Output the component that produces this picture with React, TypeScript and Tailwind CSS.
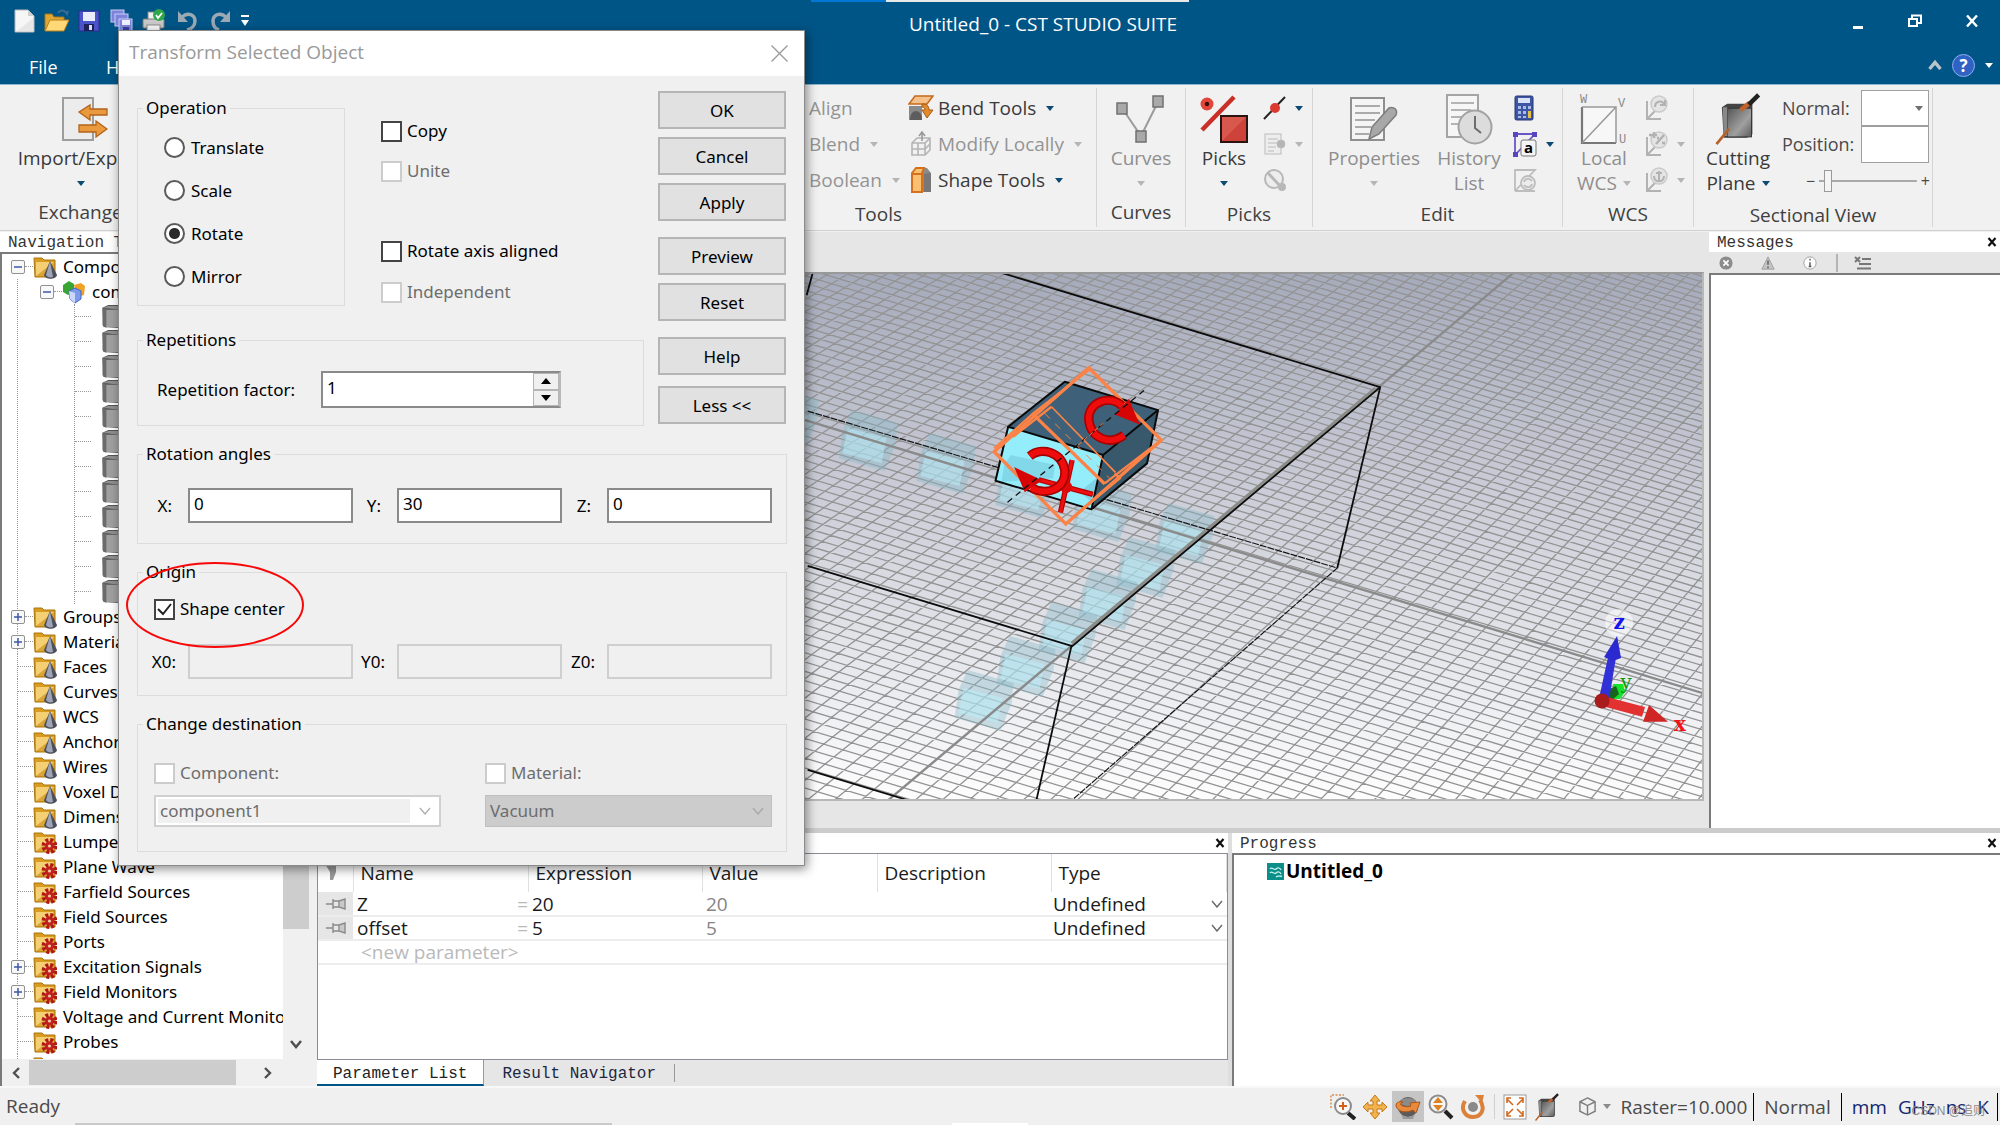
import React from "react";

const UI = "font-['Open_Sans','Noto_Sans',sans-serif]";
const MONO = "font-['Liberation_Mono','Noto_Sans_CJK_SC',monospace]";

/* ---------- small shared pieces ---------- */

function Caret({ muted = false }: { muted?: boolean }) {
  return (
    <svg viewBox="0 0 8 5" className={muted ? "w-2 h-[5px] text-[#b5b5b5] shrink-0" : "w-2 h-[5px] text-[#0b4a72] shrink-0"}>
      <path d="M0 0h8L4 5z" fill="currentColor" />
    </svg>
  );
}

function Chevron({ className = "" }: { className?: string }) {
  return (
    <svg viewBox="0 0 12 8" className={"w-3 h-2 " + className} fill="none" stroke="currentColor" strokeWidth="1.4">
      <path d="M1 1l5 6 5-6" />
    </svg>
  );
}

function CloseX() {
  return (
    <svg viewBox="0 0 10 10" className="w-2.5 h-2.5" stroke="#111" strokeWidth="2.2">
      <path d="M1.5 1l7 8M8.5 1l-7 8" />
    </svg>
  );
}

/* ---------- title bar ---------- */

function TitleBar() {
  return (
    <header className="relative flex h-[84px] shrink-0 flex-col bg-[#005587] text-white">
      <div className="absolute inset-x-0 top-0 flex h-0.5 justify-center">
        <div className="h-0.5 w-[75px] bg-[#0078d7]" />
        <div className="h-0.5 w-[303px] bg-[#e8e8e8]" />
      </div>
      <div className="grid h-[42px] grid-cols-[1fr_auto_1fr] items-center">
        <div className="flex items-center gap-2 pl-[14px]">
          <svg viewBox="0 0 22 24" className="h-6 w-[22px]">
            <path d="M1 1h13l6 6v16H1z" fill="#f6f6f6" stroke="#b9b9b9" />
            <path d="M14 1v6h6z" fill="#cfcfcf" />
            <path d="M3 22L19 9v13z" fill="#dcdcdc" opacity=".6" />
          </svg>
          <svg viewBox="0 0 26 24" className="h-6 w-[26px]">
            <path d="M1 22V5h7l2 3h10v4H8z" fill="#e0a732" stroke="#a97412" />
            <path d="M1 22l5-11h19l-5 11z" fill="#ffd877" stroke="#b57e17" />
            <path d="M14 4c3-4 7-3 9 1l1-3" fill="none" stroke="#3b6c93" strokeWidth="2" />
          </svg>
          <svg viewBox="0 0 22 22" className="h-[22px] w-[22px]">
            <rect x="1" y="1" width="20" height="20" fill="#4b53c8" stroke="#2b2f92" />
            <rect x="5" y="2" width="12" height="9" fill="#e9ecfb" />
            <rect x="6" y="14" width="10" height="7" fill="#1e2156" />
            <rect x="11" y="15" width="3" height="5" fill="#d9dcf5" />
          </svg>
          <svg viewBox="0 0 24 24" className="ml-0.5 h-6 w-6">
            <g fill="#7d84dc" stroke="#c9ccf5">
              <rect x="1" y="1" width="13" height="12" />
              <rect x="5" y="5" width="13" height="12" />
              <rect x="9" y="10" width="13" height="12" />
            </g>
            <rect x="12" y="11" width="8" height="5" fill="#eef0ff" />
            <rect x="13" y="18" width="6" height="4" fill="#3a3f9b" />
          </svg>
          <svg viewBox="0 0 24 24" className="h-6 w-6">
            <rect x="6" y="3" width="12" height="8" fill="#f0f0f0" stroke="#888" />
            <rect x="1" y="10" width="21" height="9" rx="1" fill="#c9c9c9" stroke="#7b7b7b" />
            <rect x="5" y="16" width="13" height="7" fill="#fafafa" stroke="#8c8c8c" />
            <circle cx="17" cy="6" r="6" fill="#2fa84a" />
            <path d="M14 6l2 3 4-5" fill="none" stroke="#fff" strokeWidth="1.8" />
          </svg>
          <svg viewBox="0 0 24 24" className="ml-0.5 h-6 w-6" fill="none" stroke="#9aa9b4" strokeWidth="3.5">
            <path d="M5 9c7-7 14-3 14 3 0 5-4 8-8 9" />
            <path d="M2 2v11h10z" fill="#9aa9b4" stroke="none" />
          </svg>
          <svg viewBox="0 0 24 24" className="h-6 w-6" fill="none" stroke="#9aa9b4" strokeWidth="3.5">
            <path d="M19 9C12 2 5 6 5 12c0 5 3 8 6 9" />
            <path d="M22 2v11H12z" fill="#9aa9b4" stroke="none" />
          </svg>
          <svg viewBox="0 0 10 12" className="h-3 w-2.5" fill="#fff">
            <path d="M1 0h8v2H1zM1 5h8L5 11z" />
          </svg>
        </div>
        <h1 className="pl-[86px] pt-1.5 text-[19px] leading-6">Untitled_0 - CST STUDIO SUITE</h1>
        <div className="flex items-center justify-end gap-11 pr-[22px]">
          <button aria-label="Minimize" className="flex h-4 w-3 items-end justify-center">
            <span className="h-[3px] w-2.5 bg-white" />
          </button>
          <button aria-label="Restore">
            <svg viewBox="0 0 14 14" className="h-3.5 w-3.5" fill="none" stroke="#fff" strokeWidth="2">
              <path d="M4 4V1.5h9V9h-3" />
              <rect x="1" y="5" width="8" height="7" />
            </svg>
          </button>
          <button aria-label="Close">
            <svg viewBox="0 0 12 12" className="h-3 w-3" stroke="#fff" strokeWidth="2.4">
              <path d="M1 0.5l10 11M11 0.5l-10 11" />
            </svg>
          </button>
        </div>
      </div>
      <div className="flex h-[42px] items-center justify-between pb-0">
        <nav className="flex pl-[29px] pt-2 text-[18px]">
          <a href="#file" className="w-[77px]">File</a>
          <a href="#home">Home</a>
        </nav>
        <div className="flex items-center gap-2.5 pr-[7px] pt-1">
          <svg viewBox="0 0 14 12" className="h-3 w-3.5" fill="none" stroke="#b9c3ca" strokeWidth="3.4">
            <path d="M1.5 10L7 3.5 12.5 10" />
          </svg>
          <button aria-label="Help" className="flex h-[23px] w-[23px] items-center justify-center rounded-full border border-[#8fb0ee] bg-[#2f62c4] text-[17px] font-bold leading-none">
            ?
          </button>
          <svg viewBox="0 0 8 5" className="h-[5px] w-2" fill="#fff">
            <path d="M0 0h8L4 5z" />
          </svg>
        </div>
      </div>
    </header>
  );
}

/* ---------- ribbon ---------- */

function Group({ label, className, children }: { label: string; className: string; children: React.ReactNode }) {
  return (
    <section className={"my-[3px] flex shrink-0 flex-col border-r border-[#d5d5d5] " + className}>
      <div className="flex flex-1">{children}</div>
      <h2 className="h-[32px] text-center text-[19px] leading-8 text-[#3f3f3f]">{label}</h2>
    </section>
  );
}

function Big({ icon, lines, muted = false, className = "", caret = true }: { icon: React.ReactNode; lines: string[]; muted?: boolean; className?: string; caret?: boolean }) {
  return (
    <button className={"flex flex-col items-center pt-1 text-[19px] leading-[25px] " + (muted ? "text-[#8e8e8e] " : "text-[#3a3a3a] ") + className}>
      <span className="flex h-[54px] items-center justify-center">{icon}</span>
      <span>{lines[0]}</span>
      <span className="flex h-[25px] items-center gap-1.5">
        {lines[1]}
        {caret && <Caret muted={muted} />}
      </span>
    </button>
  );
}

function Tool({ icon, label, muted = false, caret = true }: { icon?: React.ReactNode; label: string; muted?: boolean; caret?: boolean }) {
  return (
    <button className={"flex h-9 items-center gap-1 whitespace-nowrap text-[19px] " + (muted ? "text-[#949494]" : "text-[#3a3a3a]")}>
      {icon}
      {label}
      {caret && <span className="ml-1.5"><Caret muted={muted} /></span>}
    </button>
  );
}

function Small({ icon, label, caret = true, muted = false }: { icon: React.ReactNode; label: string; caret?: boolean; muted?: boolean }) {
  return (
    <button aria-label={label} className="flex h-9 items-center gap-2">
      {icon}
      {caret && <Caret muted={muted} />}
    </button>
  );
}

function CuttingIcon({ className }: { className: string }) {
  return (
    <svg viewBox="0 0 50 58" className={className}>
      <defs>
        <linearGradient id="cut" x1="0" y1="0" x2="1" y2="1">
          <stop offset="0" stopColor="#555" />
          <stop offset=".6" stopColor="#a0a0a0" />
          <stop offset="1" stopColor="#5c5c5c" />
        </linearGradient>
      </defs>
      <path d="M7 16l6-4h28v34l-6 4H9z" fill="#444" />
      <rect x="13" y="17" width="27" height="32" fill="url(#cut)" stroke="#333" />
      <path d="M8 16h5v32H9z" fill="#888" />
      <path d="M1 57l14-17" stroke="#b5622a" strokeWidth="3" />
      <path d="M28 19l10-8" stroke="#c5622a" strokeWidth="5" />
      <path d="M37 13L48 2" stroke="#222" strokeWidth="5" />
    </svg>
  );
}

function WcsIcon({ kind }: { kind: number }) {
  return (
    <svg viewBox="0 0 26 26" className="h-[26px] w-[26px]" fill="none" stroke="#b2b2b2" strokeWidth="2">
      <path d="M4 6v18h14M4 24l9-9" />
      <circle cx="16" cy="9" r="8" fill="#e4e4e4" stroke="#cacaca" strokeWidth="1.5" />
      {kind === 0 && <path d="M12 12c0-6 7-7 9-3M22 5v5h-5" />}
      {kind === 1 && <path d="M6 4h8M11 1v6M13 13l8-9M14 7h2M19 12h3" strokeWidth="2.4" />}
      {kind === 2 && <path d="M16 4v10M11 9c0 7 10 7 10 0M13 6h6" />}
    </svg>
  );
}

function Ribbon() {
  return (
    <div className="flex h-[147px] shrink-0 border-b border-t border-b-[#d0d0d0] border-t-[#8fb4cb] bg-[#f1f1f1]">
      <Group label="Exchange" className="w-[162px]">
        <Big
          className="mx-auto"
          lines={["Import/Export"]}
          icon={
            <svg viewBox="0 0 46 44" className="ml-2 h-11 w-[46px]">
              <rect x="1" y="1" width="30" height="42" fill="#ececec" stroke="#9d9d9d" strokeWidth="2" />
              <path d="M45 12H28V8L17 15l11 8v-5h17z" fill="#ea9a3c" stroke="#b3631a" strokeWidth="1.3" />
              <path d="M17 28h17v-4l11 8-11 8v-5H17z" fill="#ea9a3c" stroke="#b3631a" strokeWidth="1.3" />
            </svg>
          }
        />
      </Group>
      <div className="w-[499px] shrink-0" />
      <Group label="Tools" className="w-[436px]">
        <div className="ml-[148px] w-[99px] pt-[2px]">
          <Tool label="Align" muted caret={false} />
          <Tool label="Blend" muted />
          <Tool label="Boolean" muted />
        </div>
        <div className="pt-[2px]">
          <Tool
            label="Bend Tools"
            icon={
              <svg viewBox="0 0 26 26" className="h-[26px] w-[26px]">
                <path d="M7 1h18l-6 8H1z" fill="#f5c08a" stroke="#c46a1c" strokeWidth="1.5" />
                <path d="M1 11h13v14H1z" fill="#8a8a8a" />
                <path d="M2 25c0-12 12-12 12 0z" fill="#5d5d5d" />
                <path d="M14 9c6 0 7 3 7 6h4l-6 8-5-8h3c0-2-1-3-3-3z" fill="#e08a2c" stroke="#a85c12" />
              </svg>
            }
          />
          <Tool
            label="Modify Locally"
            muted
            icon={
              <svg viewBox="0 0 26 26" className="h-[26px] w-[26px]" fill="none" stroke="#b4b4b4" strokeWidth="1.6">
                <path d="M4 12l5-5h13v12l-5 5H4zM4 12h13v12M17 12l5-5M4 18h13l5-5M10 12v12" />
                <path d="M14 10V2M11 5l3-4 3 4" stroke="#999" />
              </svg>
            }
          />
          <Tool
            label="Shape Tools"
            icon={
              <svg viewBox="0 0 26 26" className="h-[26px] w-[26px]">
                <path d="M4 6l4-5h11l4 5v19H4z" fill="#8b8b8b" />
                <path d="M4 6l4-5h8l-2 5v19H4z" fill="#f8c070" stroke="#d6701c" strokeWidth="2" />
                <path d="M4 7h12" stroke="#d6701c" strokeWidth="2" />
                <path d="M16 7l7-1v19h-7z" fill="#777" />
              </svg>
            }
          />
        </div>
      </Group>
      <Group label="Curves" className="w-[89px]">
        <Big
          className="mx-auto"
          muted
          lines={["Curves"]}
          icon={
            <svg viewBox="0 0 50 50" className="h-[50px] w-[50px]">
              <path d="M6 14l19 28L42 8" fill="none" stroke="#9b9b9b" strokeWidth="2" />
              <g fill="#a9a9a9" stroke="#707070" strokeWidth="1.5">
                <rect x="1" y="9" width="10" height="11" />
                <rect x="37" y="2" width="10" height="11" />
                <rect x="20" y="37" width="10" height="11" />
              </g>
            </svg>
          }
        />
      </Group>
      <Group label="Picks" className="w-[127px]">
        <Big
          className="ml-[14px] w-12"
          lines={["Picks"]}
          icon={
            <svg viewBox="0 0 48 50" className="h-[50px] w-12">
              <circle cx="7" cy="10" r="6.5" fill="#e2453a" />
              <circle cx="7" cy="10" r="2.2" fill="#3a0d0a" />
              <path d="M2 36L34 3" stroke="#c92f26" strokeWidth="4.5" />
              <rect x="21" y="22" width="26" height="26" fill="#cd4239" stroke="#2a1412" strokeWidth="2" />
              <path d="M22 47V23h24z" fill="#e0675d" opacity=".6" />
            </svg>
          }
        />
        <div className="ml-[15px] pt-[2px]">
          <Small
            label="Pick edge"
            icon={
              <svg viewBox="0 0 24 24" className="h-6 w-6">
                <path d="M1 23L22 1" stroke="#222" strokeWidth="2" />
                <circle cx="12" cy="12" r="5" fill="#dc3a30" />
              </svg>
            }
          />
          <Small
            label="Pick list"
            muted
            icon={
              <svg viewBox="0 0 24 24" className="h-6 w-6" stroke="#bcbcbc" fill="none">
                <rect x="2" y="2" width="16" height="20" fill="#ededed" />
                <path d="M5 7h10M5 11h10M5 15h8M5 19h6" />
                <circle cx="18" cy="12" r="4" fill="#b5b5b5" />
              </svg>
            }
          />
          <Small
            label="Clear picks"
            caret={false}
            icon={
              <svg viewBox="0 0 24 24" className="h-6 w-6" stroke="#b8b8b8" strokeWidth="2" fill="#ededed">
                <circle cx="11" cy="11" r="9" />
                <path d="M5 5l13 14" strokeWidth="3" />
                <circle cx="19" cy="19" r="3" fill="#b8b8b8" />
              </svg>
            }
          />
        </div>
      </Group>
      <Group label="Edit" className="w-[250px]">
        <Big
          className="ml-[13px] w-[96px]"
          muted
          lines={["Properties"]}
          icon={
            <svg viewBox="0 0 50 48" className="h-12 w-[50px]">
              <rect x="2" y="3" width="33" height="42" fill="#f4f4f4" stroke="#8f8f8f" strokeWidth="2" />
              <path d="M6 11h25M6 18h25M6 25h20M6 32h16M6 39h14" stroke="#aaa" strokeWidth="2" />
              <path d="M20 44l3-12L40 13c5-2 9 2 7 7L30 39z" fill="#a8a8a8" stroke="#7d7d7d" strokeWidth="1.5" />
            </svg>
          }
        />
        <Big
          className="ml-1 w-[86px]"
          muted
          caret={false}
          lines={["History", "List"]}
          icon={
            <svg viewBox="0 0 48 52" className="h-[52px] w-12">
              <rect x="2" y="2" width="31" height="42" fill="#f6f6f6" stroke="#a5a5a5" strokeWidth="2" />
              <path d="M6 10h23M6 17h20M6 24h12M6 31h8" stroke="#b4b4b4" strokeWidth="2" />
              <circle cx="30" cy="34" r="16.5" fill="#dcdcdc" stroke="#a2a2a2" strokeWidth="2" />
              <path d="M30 23v12l6 5" fill="none" stroke="#6d6d6d" strokeWidth="2" />
            </svg>
          }
        />
        <div className="flex flex-col pt-[2px]">
          <Small
            label="Calculator"
            caret={false}
            icon={
              <svg viewBox="0 0 24 26" className="h-[26px] w-6">
                <rect x="3" y="1" width="18" height="24" rx="1.5" fill="#3d55a5" stroke="#26366f" />
                <rect x="6" y="3" width="12" height="5" fill="#d9e2f4" />
                <g fill="#a9bae6">
                  <path d="M6 11h3v3H6zM11 11h3v3h-3zM16 11h3v3h-3zM6 16h3v3H6zM11 16h3v3h-3zM6 21h3v2H6zM11 21h3v2h-3z" />
                </g>
                <path d="M16 16h3v7h-3z" fill="#e5c04a" />
              </svg>
            }
          />
          <Small
            label="Parameters"
            icon={
              <svg viewBox="0 0 26 26" className="h-[26px] w-[26px]">
                <path d="M3 24V3h20L3 24" fill="none" stroke="#6a55c9" strokeWidth="1.8" />
                <path d="M1 1h5v5H1zM20 1h5v5h-5zM1 21h5v5H1z" fill="#5a45c0" />
                <rect x="9" y="9" width="15" height="16" rx="2" fill="#f4f4f4" stroke="#777" />
                <text x="12" y="22" className="font-['Open_Sans',sans-serif] text-[15px] font-bold">a</text>
              </svg>
            }
          />
          <Small
            label="Parametric update"
            caret={false}
            icon={
              <svg viewBox="0 0 26 26" className="h-[26px] w-[26px]" fill="none" stroke="#bdbdbd" strokeWidth="1.8">
                <path d="M3 24V3h20L3 24M3 24h20" />
                <circle cx="16" cy="16" r="7" fill="#ececec" />
                <path d="M12 15c1-4 6-4 8-1M20 17c-1 4-6 4-8 1" />
              </svg>
            }
          />
        </div>
      </Group>
      <Group label="WCS" className="w-[131px]">
        <Big
          className="ml-[10px] w-[62px]"
          muted
          lines={["Local", "WCS"]}
          icon={
            <svg viewBox="0 0 48 52" className="-ml-1 h-[52px] w-12" fill="none">
              <rect x="4" y="14" width="34" height="36" fill="#f7f7f7" />
              <path d="M4 14v36h34" stroke="#777" strokeWidth="2.2" />
              <path d="M4 14h34v36M4 50L38 14" stroke="#999" strokeWidth="1.5" />
              <g fill="#8a8a8a" className="font-['Liberation_Mono',monospace] text-[12px]">
                <text x="2" y="10">W</text>
                <text x="40" y="14">V</text>
                <text x="41" y="50">U</text>
              </g>
            </svg>
          }
        />
        <div className="ml-[8px] pt-[2px]">
          <Small label="Rotate WCS" caret={false} icon={<WcsIcon kind={0} />} />
          <Small label="Move WCS" muted icon={<WcsIcon kind={1} />} />
          <Small label="Fix WCS" muted icon={<WcsIcon kind={2} />} />
        </div>
      </Group>
      <Group label="Sectional View" className="w-[239px]">
        <Big className="ml-2 w-[72px]" lines={["Cutting", "Plane"]} icon={<CuttingIcon className="h-[52px] w-12" />} />
        <div className="ml-2 flex-1 text-[18px] text-[#4a4a4a]">
          <div className="grid grid-cols-[1fr_68px] items-center pr-[3px] pt-0.5">
            <label htmlFor="normal">Normal:</label>
            <div className="relative">
              <select id="normal" className="block h-9 w-full appearance-none border border-[#9f9f9f] bg-white" />
              <svg viewBox="0 0 8 5" className="pointer-events-none absolute right-1.5 top-4 h-[5px] w-2">
                <path d="M0 0h8L4 5z" fill="#6f6f6f" />
              </svg>
            </div>
            <label htmlFor="position">Position:</label>
            <input id="position" className="h-[37px] w-full border border-[#9f9f9f] bg-white px-1" />
          </div>
          <div className="flex h-9 items-center gap-1 pl-6 pr-0.5 text-[16px]">
            <span>−</span>
            <input
              type="range"
              aria-label="Position of cutting plane"
              defaultValue={5}
              className="h-[22px] w-[94px] flex-1 appearance-none bg-transparent bg-[linear-gradient(#a9a9a9,#a9a9a9)] bg-[length:100%_2px] bg-center bg-no-repeat [&::-webkit-slider-thumb]:h-[22px] [&::-webkit-slider-thumb]:w-2 [&::-webkit-slider-thumb]:appearance-none [&::-webkit-slider-thumb]:border [&::-webkit-slider-thumb]:border-solid [&::-webkit-slider-thumb]:border-[#9a9a9a] [&::-webkit-slider-thumb]:bg-[#f4f4f4]"
            />
            <span>+</span>
          </div>
        </div>
      </Group>
    </div>
  );
}

/* ---------- navigation tree ---------- */

function Folder({ gear }: { gear: boolean }) {
  return (
    <svg viewBox="0 0 24 24" className="h-6 w-6 shrink-0">
      <path d="M1 3h8l2 2h11v17H2z" fill="#d99c1e" />
      <path d="M3 7h18v14H3z" fill="#f4cf73" />
      <path d="M3 21L21 7v14z" fill="#dba535" />
      <path d="M1 3h8l2 2h11v17H2z" fill="none" stroke="#a9750f" />
      {gear ? (
        <>
          <circle cx="16.5" cy="16" r="5.5" fill="none" stroke="#b01818" strokeWidth="5" strokeDasharray="2.6 1.72" />
          <circle cx="16.5" cy="16" r="4.5" fill="#c22020" />
          <circle cx="16.5" cy="16" r="1.6" fill="#f2c9a0" />
        </>
      ) : (
        <>
          <path d="M17 6l7 14c-1 5-12 5-13 0z" fill="#4d505a" />
          <path d="M17 6l3 16c-3 1-6 0-7-2z" fill="#9fa5b8" />
        </>
      )}
    </svg>
  );
}

function Expander({ open }: { open: boolean }) {
  return (
    <svg viewBox="0 0 14 14" className="h-3.5 w-3.5 shrink-0">
      <rect x=".5" y=".5" width="13" height="13" rx="1.5" fill="#f8f8f8" stroke="#919191" />
      <path d={open ? "M3 7h8" : "M3 7h8M7 3v8"} stroke="#3f57a8" strokeWidth="1.5" />
    </svg>
  );
}

const FOLDERS: [string, boolean, boolean][] = [
  ["Groups", false, true],
  ["Materials", false, true],
  ["Faces", false, false],
  ["Curves", false, false],
  ["WCS", false, false],
  ["Anchor Points", false, false],
  ["Wires", false, false],
  ["Voxel Data", false, false],
  ["Dimensions", false, false],
  ["Lumped Elements", true, false],
  ["Plane Wave", true, false],
  ["Farfield Sources", true, false],
  ["Field Sources", true, false],
  ["Ports", true, false],
  ["Excitation Signals", true, true],
  ["Field Monitors", true, true],
  ["Voltage and Current Monitors", true, false],
  ["Probes", true, false],
  ["Mesh", true, false],
];

function NavTree() {
  return (
    <aside className="flex w-[313px] shrink-0 flex-col">
      <h2 className={"h-5 bg-white pl-2 text-[16px] leading-[22px] text-[#333] " + MONO}>Navigation Tree</h2>
      <div className="flex min-h-0 flex-1 flex-col border-l-2 border-t-2 border-[#7a7a7a] bg-[#f0f0f0]">
        <div className="flex min-h-0 flex-1">
          <ul className="min-w-0 flex-1 overflow-hidden whitespace-nowrap bg-white text-[17px] font-[Tahoma,'Noto_Sans',sans-serif]">
            <li className="flex h-[25px] items-center pl-[9px]">
              <Expander open />
              <span className="w-2 border-t border-dotted border-[#999]" />
              <Folder gear={false} />
              <span className="pl-1.5">Components</span>
            </li>
            <li className="ml-[15px] border-l border-dotted border-[#999]">
              <div className="flex h-[25px] items-center pl-[22px]">
                <Expander open />
                <span className="w-2 border-t border-dotted border-[#999]" />
                <svg viewBox="0 0 24 24" className="h-6 w-6">
                  <path d="M1 5l6-4 5 3v9l-6 2-5-3z" fill="#3aa535" />
                  <path d="M12 5l7-2 4 3-1 9-7 2z" fill="#efa226" />
                  <path d="M7 11l6-3 6 3v8l-6 4-5-4z" fill="#7d9bea" stroke="#4765c4" />
                  <path d="M7 11l6 2v10l-5-4z" fill="#cbd7fb" />
                </svg>
                <span className="pl-1.5">component1</span>
              </div>
              <ul className="ml-[56px] border-l border-dotted border-[#999]">
                {Array.from({ length: 12 }, (_, i) => (
                  <li key={i} className="flex h-[25px] items-center">
                    <span className="w-4 border-t border-dotted border-[#999]" />
                    <svg viewBox="0 0 26 26" className="ml-2.5 h-[25px] w-[26px]">
                      <path d="M1 4l6-3h18v17l-7 7-16-1z" fill="#555" />
                      <path d="M1 4l4 1v20l-4-3z" fill="#6b6b6b" />
                      <path d="M5 6h13v18H5z" fill="#a0a0a0" />
                      <path d="M2 4l5-2h17l-6 4z" fill="#909090" />
                    </svg>
                  </li>
                ))}
              </ul>
            </li>
            {FOLDERS.map(([name, gear, exp]) => (
              <li key={name} className="ml-[15px] border-l border-dotted border-[#999]">
                <div className="flex h-[25px] items-center">
                  {exp ? (
                    <span className="-ml-[7px] flex shrink-0 items-center">
                      <Expander open={false} />
                      <span className="w-2 border-t border-dotted border-[#999]" />
                    </span>
                  ) : (
                    <span className="w-[15px] shrink-0 border-t border-dotted border-[#999]" />
                  )}
                  <Folder gear={gear} />
                  <span className="shrink-0 pl-1.5">{name}</span>
                </div>
              </li>
            ))}
          </ul>
          <div className="flex w-[26px] flex-col justify-end bg-[#f0f0f0]">
            <div className="h-[400px] bg-[#cdcdcd]" />
            <div className="flex h-[130px] items-end justify-center pb-2.5">
              <svg viewBox="0 0 12 8" className="h-2.5 w-3" fill="none" stroke="#505050" strokeWidth="2.5">
                <path d="M1 1l5 6 5-6" />
              </svg>
            </div>
          </div>
          <div className="w-1 bg-[#f0f0f0]" />
        </div>
        <div className="flex h-[27px] items-center">
          <span className="flex w-[27px] justify-center">
            <svg viewBox="0 0 8 12" className="h-3 w-2.5" fill="none" stroke="#505050" strokeWidth="2.4">
              <path d="M7 1L2 6l5 5" />
            </svg>
          </span>
          <span className="h-[25px] w-[207px] bg-[#cdcdcd]" />
          <span className="flex-1" />
          <svg viewBox="0 0 8 12" className="mr-10 h-3 w-2.5" fill="none" stroke="#505050" strokeWidth="2.4">
            <path d="M1 1l5 5-5 5" />
          </svg>
        </div>
      </div>
    </aside>
  );
}

/* ---------- 3D view ---------- */

const VP = { x: 3155, y: -1111 };

function depthLines() {
  const out: string[] = [];
  for (let k = -36; k < 130; k++) {
    if (k === 0) continue;
    const x0 = 887 + k * 27;
    const t = (800 - 265) / (800 - VP.y);
    out.push(`M${x0} 800L${(x0 + (VP.x - x0) * t).toFixed(1)} 265`);
  }
  return out.join("");
}

function crossLines() {
  const out: string[] = [];
  const at = (y: number) => out.push(`M317 ${(y - 933 * 0.3).toFixed(1)}L1701 ${(y + 451 * 0.3).toFixed(1)}`);
  const step = (y: number) => 6.4 + ((y - 273) / 527) * 3;
  for (let y = 554; y < 1090; y += step(y)) at(y);
  for (let y = 554 - step(554); y > 130; y -= step(y)) at(y);
  return out.join("");
}

const GHOSTS = [
  [758, 387], [837, 410], [915, 433], [994, 457], [1071, 481], [1154, 503],
  [1115, 537], [1077, 569], [1037, 602], [995, 636], [953, 670],
];

function Viewport() {
  return (
    <div className="flex min-w-0 flex-1 flex-col bg-[#e6e6e6] pb-[27px] pt-10">
      <div className="mr-[5px] min-h-0 flex-1 border-2 border-[#b8b8b8] border-t-[#999]">
        <svg viewBox="317 273 1384 527" preserveAspectRatio="xMaxYMid slice" className="block h-full w-full">
          <defs>
            <linearGradient id="sky" x1="0" y1="0" x2="0" y2="1">
              <stop offset="0" stopColor="#a4a9ba" />
              <stop offset=".5" stopColor="#d2d4dd" />
              <stop offset="1" stopColor="#ffffff" />
            </linearGradient>
          </defs>
          <rect x="317" y="265" width="1390" height="545" fill="url(#sky)" />
          <path d={depthLines() + crossLines()} stroke="#939393" strokeWidth="1.3" fill="none" />
          {GHOSTS.map(([x, y]) => (
            <g key={x} transform={`translate(${x} ${y})`}>
              <path d="M13 0L59 13 57 34 46 61 0 48 4 20z" fill="#86b9c8" opacity=".4" strokeLinejoin="round" />
              <path d="M9 18L48 28 43 53 4 43z" fill="#b9f0fc" opacity=".5" />
            </g>
          ))}
          <path d="M317 272L1701 693M887 800L1070 646 1375 389 1512 273" stroke="#8a8a8a" strokeWidth="2.4" fill="none" />
          <path d="M1001 273L1379 387 1336 568M806 566L1070 646 1035 800M806 770L905 800M1379 387L1070 647M811 273L805 295" stroke="#0c0c0c" strokeWidth="1.8" fill="none" />
          <path d="M1374 388L1070 643" stroke="#8b8c88" strokeWidth="2.6" />
          <path d="M806 411L1336 568 1071 800" stroke="#151515" strokeWidth="1.2" strokeDasharray="7 1" fill="none" />

          <g transform="translate(980 355) scale(.33333)">
            <path d="M250 80L530 165 365 300 80 215z" fill="#3e6078" />
            <path d="M530 165L497 325 330 463 365 300z" fill="#38586c" />
            <path d="M80 215L365 300 330 463 42 377z" fill="#93edfb" />
            <path d="M88 300L220 330 215 370 60 380 68 330z" fill="#76c8dc" opacity=".6" />
            <path d="M350 365L330 440 295 410z" fill="#76c8dc" opacity=".7" />
            <path d="M250 80L530 165 365 300 80 215zM530 165L497 325 330 463 365 300M80 215L42 377 330 463" fill="none" stroke="#0a0a0a" strokeWidth="6" strokeLinejoin="round" />
            <path d="M322 38L540 255 253 507 38 290z" fill="none" stroke="#fb8347" strokeWidth="10" />
            <path d="M38 280L155 175 322 45M210 155L95 245M370 385L535 258M400 355L415 370 270 490" fill="none" stroke="#fb8347" strokeWidth="7" />
            <path d="M155 178L370 387" stroke="#fb8347" strokeWidth="10" />
            <path d="M210 155L402 352" stroke="#fb8347" strokeWidth="5" />
            <path d="M190 175L385 370" stroke="#fb8347" strokeWidth="3" strokeDasharray="22 22" />
            <path d="M272 315L237 472M172 374L334 418" stroke="#b80000" strokeWidth="16" />
            <path d="M272 315L237 472M172 374L334 418" stroke="#ee1010" strokeWidth="9" />
            <circle cx="254" cy="396" r="18" fill="#dd0808" />
            <g fill="none" strokeLinecap="butt">
              <path d="M428 240C385 272 328 250 322 195C318 140 385 118 422 152" stroke="#a80000" strokeWidth="28" />
              <path d="M428 240C385 272 328 250 322 195C318 140 385 118 422 152" stroke="#ee0c0c" strokeWidth="18" />
              <path d="M145 303C180 275 240 290 250 345C256 400 195 425 150 398" stroke="#a80000" strokeWidth="28" />
              <path d="M145 303C180 275 240 290 250 345C256 400 195 425 150 398" stroke="#ee0c0c" strokeWidth="18" />
            </g>
            <path d="M400 178L442 132 475 208zM98 336L182 376 130 412z" fill="#d60404" />
            <path d="M78 442L495 100" stroke="#111" strokeWidth="4" strokeDasharray="18 14" />
            <path d="M290 270L365 205" stroke="#fb8347" strokeWidth="3" strokeDasharray="14 8" />
          </g>

          <circle cx="1618" cy="623" r="14" fill="#fff" opacity=".5" />
          <path d="M1612 684h10l2 8-5 7h-8z" fill="#15e22c" />
          <path d="M1606 690l9-4 3 8-7 6-6-4z" fill="#17651d" />
          <path d="M1598 698L1607 657h8l-7 43z" fill="#3131d8" />
          <path d="M1616 636l4 22-8 3-9-4z" fill="#2a2ad0" />
          <path d="M1602 696L1644 707 1641 717 1601 706z" fill="#e23131" />
          <path d="M1648 705l19 17-25 0z" fill="#cf2525" />
          <circle cx="1601" cy="701" r="7.5" fill="#a81c1c" />
          <g textAnchor="middle" className="font-['DejaVu_Serif',serif] text-[20px]">
            <text x="1618" y="629" fill="#1414f0" fontWeight="bold">z</text>
            <text x="1625" y="689" fill="#0a9a0a">y</text>
            <text x="1679" y="731" fill="#f01414" fontWeight="bold">x</text>
          </g>
        </svg>
      </div>
    </div>
  );
}

/* ---------- side and bottom panels ---------- */

function PanelTitle({ children }: { children?: React.ReactNode }) {
  return (
    <div className={"flex h-5 shrink-0 items-center justify-between bg-white pl-2 pr-[3px] text-[16px] leading-[18px] text-[#333] " + MONO}>
      <h2 className="pt-0.5">{children}</h2>
      <button aria-label="Close panel"><CloseX /></button>
    </div>
  );
}

function Messages() {
  return (
    <aside className="flex w-[291px] shrink-0 flex-col">
      <PanelTitle>Messages</PanelTitle>
      <div className="flex h-[21px] shrink-0 items-center bg-[#e6e6e6] pl-[9px]">
        <svg viewBox="0 0 16 16" className="h-3.5 w-4"><circle cx="8" cy="8" r="7.5" fill="#8b8b8b" /><path d="M5 5l6 6M11 5l-6 6" stroke="#fff" strokeWidth="2" /></svg>
        <svg viewBox="0 0 16 16" className="ml-[26px] h-3.5 w-4"><path d="M8 1l7 14H1z" fill="#c4c4c4" stroke="#999" /><path d="M8 5v5M8 12v2" stroke="#555" strokeWidth="1.6" /></svg>
        <svg viewBox="0 0 16 16" className="ml-[26px] h-3.5 w-4"><circle cx="8" cy="8" r="7" fill="#fff" stroke="#999" /><path d="M8 3v2M8 7v5M6.5 12h3" stroke="#555" strokeWidth="1.6" /></svg>
        <span className="ml-[18px] h-[18px] w-0.5 bg-[#b4b4b4]" />
        <svg viewBox="0 0 18 14" className="ml-4 h-3.5 w-[18px]" fill="none" stroke="#777" strokeWidth="2">
          <path d="M1 1l5 5M6 1L1 6M8 3h9M5 8h12M3 12.5h14" />
        </svg>
      </div>
      <div className="flex-1 border-l-2 border-t-2 border-[#7a7a7a] bg-white" />
    </aside>
  );
}

function Pin() {
  return (
    <svg viewBox="0 0 20 12" className="mx-auto h-3 w-5" fill="#c9c9c9" stroke="#8b8b8b" strokeWidth="1.4">
      <path d="M0 6h7M7 1v10M7 3h6M7 9h6M13 3l6-2v10l-6-2z" />
    </svg>
  );
}

const PARAMS = [
  { name: "Z", value: "20" },
  { name: "offset", value: "5" },
];

function Parameters() {
  return (
    <section className="flex min-w-0 flex-1 flex-col">
      <PanelTitle />
      <div className="flex-1 border border-[#8c8c98] bg-white">
        <table className="w-full table-fixed border-collapse text-left text-[19px] text-[#1a1a1a]">
          <colgroup>
            <col className="w-[35px]" />
            <col className="w-[175px]" />
            <col className="w-[174px]" />
            <col className="w-[175px]" />
            <col className="w-[174px]" />
            <col />
          </colgroup>
          <thead>
            <tr className="h-[38px] [&>th]:border-r [&>th]:border-[#e0e0e0] [&>th]:pl-[7px] [&>th]:font-normal [&>th]:leading-6">
              <th aria-label="Pinned">
                <svg viewBox="0 0 12 18" className="h-[18px] w-3"><path d="M0 0h11v8l-3 8H5V8z" fill="#9a9a9a" /></svg>
              </th>
              <th>Name</th>
              <th>Expression</th>
              <th>Value</th>
              <th>Description</th>
              <th>Type</th>
            </tr>
          </thead>
          <tbody>
            {PARAMS.map((p) => (
              <tr key={p.name} className="h-6 border-b-2 border-[#ededed] leading-[22px]">
                <td className="bg-[#e6e6e6]"><Pin /></td>
                <td className="pl-1">
                  <span className="flex justify-between"><span>{p.name}</span><span className="text-[#b9b9b9]">=</span></span>
                </td>
                <td className="pl-1">{p.value}</td>
                <td className="pl-1 text-[#858585]">{p.value}</td>
                <td />
                <td>
                  <span className="relative flex items-center">
                    <select aria-label={"Type of " + p.name} className="h-[22px] w-full appearance-none bg-transparent pl-0.5 leading-[22px]">
                      <option>Undefined</option>
                    </select>
                    <Chevron className="pointer-events-none absolute right-1 text-[#666]" />
                  </span>
                </td>
              </tr>
            ))}
            <tr className="h-6 border-b-2 border-[#ededed] leading-[22px]">
              <td />
              <td colSpan={5} className="pl-2 text-[#b9b9b9]">&lt;new parameter&gt;</td>
            </tr>
          </tbody>
        </table>
      </div>
      <div className={"flex h-[26px] shrink-0 items-stretch bg-[#e6e6e6] text-[16px] leading-5 " + MONO}>
        <button className="border-b-2 border-r border-b-[#005587] border-r-[#999] bg-white px-4 pt-1 text-[#222]">Parameter List</button>
        <button className="px-[18px] pb-0.5 pt-1 text-[#1d2740]">Result Navigator</button>
        <span className="my-1 w-px bg-[#999]" />
      </div>
    </section>
  );
}

function Progress() {
  return (
    <section className="flex w-[768px] shrink-0 flex-col">
      <PanelTitle>Progress</PanelTitle>
      <div className="flex-1 border-l-2 border-t-2 border-[#7a7a7a] bg-white pl-[33px] pt-1">
        <div className="flex items-center gap-0.5 text-[19px] font-bold leading-6 text-black">
          <svg viewBox="0 0 17 17" className="h-[17px] w-[17px]">
            <rect width="17" height="17" fill="#0d8f89" />
            <path d="M3 6c2-3 4 2 6 0s4-1 5 1M3 10c2-3 4 2 6 0s4-1 5 1M9 14c2-2 4 0 6-1" fill="none" stroke="#c7f2ee" strokeWidth="1.3" />
          </svg>
          Untitled_0
        </div>
      </div>
    </section>
  );
}

/* ---------- status bar ---------- */

function StatusBar() {
  return (
    <footer className="relative flex h-[39px] shrink-0 items-center justify-between border-t-2 border-[#f8f8f8] bg-[#f0f0f0] text-[19px] text-[#4a4a4a]">
      <span className="pl-[6px]">Ready</span>
      <div className="flex h-full items-center">
        <svg viewBox="0 0 26 26" className="mr-1.5 h-[26px] w-[26px]">
          <path d="M1 14V1h13" fill="none" stroke="#d98a4c" strokeDasharray="2 1.5" strokeWidth="1.5" />
          <path d="M18 19l7 6" stroke="#222" strokeWidth="4" />
          <circle cx="13" cy="12" r="8" fill="#f7f7f7" stroke="#8c8c8c" strokeWidth="2" />
          <path d="M9 12h8M13 8v8" stroke="#d2601c" strokeWidth="2" />
        </svg>
        <svg viewBox="0 0 26 26" className="mr-1 h-[26px] w-[26px]">
          <path d="M13 1l5 6h-3v4h5V8l5 5-5 5v-3h-5v4h3l-5 6-5-6h3v-4H6v3l-5-5 5-5v3h5V7H8z" fill="#f3b34c" stroke="#c47a1c" />
        </svg>
        <span className="mr-1 flex h-[31px] w-8 items-center justify-center bg-[#c5c5c5]">
          <svg viewBox="0 0 26 26" className="h-[26px] w-[26px]">
            <circle cx="13" cy="13" r="10" fill="#5b5b5b" />
            <ellipse cx="13" cy="8" rx="8" ry="4" fill="#8b8b8b" />
            <path d="M6 20c4 4 10 4 14 0l-2 5H8z" fill="#999" />
            <path d="M1 11c0-3 5-4 7-3-3 1-3 3 0 4 3 1 6 1 8 0l-1-3 10-1-4 11-3-3c-8 4-17 1-17-5z" fill="#ea8a3c" stroke="#ad5716" />
          </svg>
        </span>
        <svg viewBox="0 0 26 26" className="mr-1.5 h-[26px] w-[26px]">
          <path d="M17 17l7 7" stroke="#222" strokeWidth="4" />
          <circle cx="10" cy="10" r="8.5" fill="#f7f7f7" stroke="#8c8c8c" strokeWidth="2" />
          <path d="M10 3l5 6H5zM10 17l5-6H5z" fill="#df8322" />
        </svg>
        <svg viewBox="0 0 26 26" className="h-[26px] w-[26px]">
          <path d="M5 7c-5 8 0 16 8 16S26 15 20 6" fill="none" stroke="#dc813c" strokeWidth="4" />
          <path d="M15 1l9 0-2 8z" fill="#dc813c" />
          <circle cx="13" cy="13" r="5" fill="#8a8a8a" />
        </svg>
        <span className="mx-2 h-[25px] w-px bg-[#cfcfcf]" />
        <svg viewBox="0 0 24 26" className="h-[26px] w-6" fill="none">
          <rect x="1" y="1" width="22" height="24" fill="#fff" stroke="#9a9a9a" />
          <path d="M10 11L4 5M4 9V4h4M14 11l6-6M20 9V4h-4M10 15l-6 6M4 17v5h4M14 15l6 6M20 17v5h-4" stroke="#d2691e" strokeWidth="1.6" />
        </svg>
        <span className="ml-2"><CuttingIcon className="h-7 w-6" /></span>
        <svg viewBox="0 0 20 20" className="ml-[19px] h-[19px] w-[19px]" fill="none" stroke="#7d7d7d" strokeWidth="1.5">
          <path d="M10 1l8 4v10l-8 4-8-4V5zM2 5l8 4 8-4M10 9v10" />
        </svg>
        <span className="ml-1.5 mr-2.5">
          <svg viewBox="0 0 8 5" className="h-[5px] w-2"><path d="M0 0h8L4 5z" fill="#8a8a8a" /></svg>
        </span>
        <span className="border-r border-black pr-1.5 leading-7">Raster=10.000</span>
        <span className="border-r border-black px-2.5 leading-7">Normal</span>
        <span className="relative flex gap-[11px] border-r border-black pl-2.5 pr-2 leading-7 text-[#14246f]">
          <span>mm</span>
          <span>GHz</span>
          <span>ns</span>
          <span>K</span>
          <span className="absolute right-3 top-2.5 whitespace-nowrap text-[12px] leading-4 text-[#8b8b8b] font-['Liberation_Sans','Noto_Sans_CJK_SC',sans-serif]">CSDN @追则</span>
        </span>
        <span className="w-0.5" />
      </div>
      <span className="absolute bottom-0 left-[75px] h-0.5 w-[537px] bg-[#c9c9c9]" />
      <span className="absolute bottom-0 left-[952px] h-0.5 w-[76px] bg-white" />
    </footer>
  );
}

/* ---------- transform dialog ---------- */

function Fieldset({ legend, className, children }: { legend: string; className: string; children: React.ReactNode }) {
  return (
    <fieldset className={"border border-[#dcdcdc] " + className}>
      <legend className="ml-[5px] px-[3px] leading-6">{legend}</legend>
      {children}
    </fieldset>
  );
}

function Check({ label, disabled = false, checked = false, className = "" }: { label: string; disabled?: boolean; checked?: boolean; className?: string }) {
  return (
    <label className={"flex h-6 items-center gap-[5px] whitespace-nowrap " + (disabled ? "text-[#6d6d6d] " : "") + className}>
      <span className="relative flex h-[21px] w-[21px]">
        <input
          type="checkbox"
          disabled={disabled}
          defaultChecked={checked}
          className="peer h-[21px] w-[21px] appearance-none border-2 border-[#444] bg-white disabled:border-[#cccccc]"
        />
        <svg viewBox="0 0 21 21" className="pointer-events-none absolute inset-0 hidden peer-checked:block" fill="none" stroke="#222" strokeWidth="2">
          <path d="M4 10l5 5 8-10" />
        </svg>
      </span>
      {label}
    </label>
  );
}

function Field({ label, value, disabled = false }: { label: string; value?: string; disabled?: boolean }) {
  const id = "field-" + label;
  return (
    <>
      <label htmlFor={id} className={disabled ? "pr-3 text-right" : "pr-4 text-right"}>{label}:</label>
      <input
        id={id}
        defaultValue={value}
        disabled={disabled}
        className="h-[35px] w-full border-2 border-[#8a8a8a] bg-white px-1 pb-1 disabled:border-[#cfcfcf] disabled:bg-[#f0f0f0]"
      />
    </>
  );
}

function TransformDialog() {
  const btn = "h-[38px] w-full border-2 border-[#b5b5b5] bg-[#e1e1e1] leading-none";
  return (
    <div
      role="dialog"
      aria-label="Transform Selected Object"
      className="absolute left-[118px] top-[30px] w-[687px] border border-[#8a8a8a] bg-[#f0f0f0] pb-[13px] text-[17px] text-black shadow-[2px_3px_10px_rgba(0,0,0,0.45)] font-[Tahoma,'Noto_Sans',sans-serif]"
    >
      <div className="flex h-[45px] items-center justify-between bg-white pl-2.5 pr-4">
        <h2 className={"pb-0.5 text-[19px] text-[#999] " + UI}>Transform Selected Object</h2>
        <button aria-label="Close">
          <svg viewBox="0 0 17 17" className="h-[17px] w-[17px]" stroke="#999" strokeWidth="1.3">
            <path d="M0.5 0.5l16 16M16.5 0.5l-16 16" />
          </svg>
        </button>
      </div>
      <div className="flex flex-col gap-4 pl-[18px] pr-[17px] pt-5">
        <div className="flex justify-between">
          <div className="flex w-[507px] flex-col gap-[22px]">
            <div className="flex gap-9">
              <Fieldset legend="Operation" className="h-[210px] w-[208px]">
                <div className="flex flex-col pl-[26px] pt-1.5">
                  {["Translate", "Scale", "Rotate", "Mirror"].map((o) => (
                    <label key={o} className="flex h-[43px] items-center gap-1.5">
                      <input
                        type="radio"
                        name="operation"
                        defaultChecked={o === "Rotate"}
                        className="h-[21px] w-[21px] appearance-none rounded-full border-2 border-[#5a5a5a] bg-white checked:bg-[radial-gradient(circle,#2b2b2b_5px,white_6px)]"
                      />
                      {o}
                    </label>
                  ))}
                </div>
              </Fieldset>
              <div className="flex flex-col pt-[23px]">
                <Check label="Copy" />
                <Check label="Unite" disabled className="mt-4" />
                <Check label="Rotate axis aligned" className="mt-14" />
                <Check label="Independent" disabled className="mt-[17px]" />
              </div>
            </div>
            <Fieldset legend="Repetitions" className="h-[98px]">
              <div className="flex items-center pl-[19px] pt-[19px]">
                <label htmlFor="repetitions" className="w-[164px]">Repetition factor:</label>
                <span className="flex h-[37px] w-[240px] border-2 border-[#8a8a8a] border-r-[#b9b9b9] bg-white">
                  <input id="repetitions" defaultValue="1" className="min-w-0 flex-1 px-1 pb-1" />
                  <span className="flex w-[26px] flex-col">
                    <button aria-label="Increase" className="flex flex-1 items-center justify-center border border-[#b5b5b5] bg-[#f0f0f0]">
                      <svg viewBox="0 0 10 6" className="h-1.5 w-2.5"><path d="M0 6h10L5 0z" /></svg>
                    </button>
                    <button aria-label="Decrease" className="flex flex-1 items-center justify-center border border-[#b5b5b5] bg-[#f0f0f0]">
                      <svg viewBox="0 0 10 6" className="h-1.5 w-2.5"><path d="M0 0h10L5 6z" /></svg>
                    </button>
                  </span>
                </span>
              </div>
            </Fieldset>
          </div>
          <div className="-mt-[5px] flex w-[129px] flex-col gap-2 pr-px">
            <button className={btn}>OK</button>
            <button className={btn}>Cancel</button>
            <button className={btn}>Apply</button>
            <button className={btn + " mt-2"}>Preview</button>
            <button className={btn}>Reset</button>
            <button className={btn + " mt-2"}>Help</button>
            <button className={btn + " mt-[3px]"}>Less &lt;&lt;</button>
          </div>
        </div>
        <Fieldset legend="Rotation angles" className="h-[102px]">
          <div className="grid grid-cols-[50px_165px_44px_165px_45px_165px] items-center pt-[22px]">
            <Field label="X" value="0" />
            <Field label="Y" value="30" />
            <Field label="Z" value="0" />
          </div>
        </Fieldset>
        <div className="relative">
          <Fieldset legend="Origin" className="h-[136px]">
            <Check label="Shape center" checked className="ml-4 mt-[13px]" />
            <div className="mt-[23px] grid grid-cols-[50px_165px_44px_165px_45px_165px] items-center">
              <Field label="X0" disabled />
              <Field label="Y0" disabled />
              <Field label="Z0" disabled />
            </div>
          </Fieldset>
          <div className="pointer-events-none absolute -left-[11px] top-0.5 h-[86px] w-[178px] rounded-[50%] border-2 border-[#f80808]" />
        </div>
        <Fieldset legend="Change destination" className="h-[140px]">
          <div className="grid grid-cols-2 gap-x-[44px] gap-y-2.5 px-4 pr-[14px] pt-[25px]">
            <Check label="Component:" disabled />
            <Check label="Material:" disabled />
            <span className="relative flex items-center border-2 border-[#d0d0d0] bg-white p-0.5">
              <select disabled aria-label="Component" className="h-6 w-[252px] appearance-none bg-[#f0f0f0] pl-0.5 leading-6 text-[#6d6d6d] opacity-100">
                <option>component1</option>
              </select>
              <Chevron className="absolute right-2 text-[#b0b0b0]" />
            </span>
            <span className="relative flex items-center">
              <select disabled aria-label="Material" className="h-8 w-full appearance-none border border-[#c0c0c0] bg-[#cccccc] pl-1 text-[#6d6d6d] opacity-100">
                <option>Vacuum</option>
              </select>
              <Chevron className="absolute right-2 text-[#a8a8a8]" />
            </span>
          </div>
        </Fieldset>
      </div>
    </div>
  );
}

export default function App() {
  return (
    <div className={"relative flex h-screen flex-col overflow-hidden bg-[#f0f0f0] " + UI}>
      <TitleBar />
      <Ribbon />
      <div className="flex min-h-0 flex-1 gap-1 pt-px">
        <NavTree />
        <main className="flex min-w-0 flex-1 flex-col">
          <div className="flex min-h-0 flex-1">
            <Viewport />
            <Messages />
          </div>
          <div className="h-[5px] shrink-0 bg-[#cccccc]" />
          <div className="flex h-[253px] shrink-0 gap-1 bg-[#dedede]">
            <Parameters />
            <Progress />
          </div>
        </main>
      </div>
      <StatusBar />
      <TransformDialog />
    </div>
  );
}
